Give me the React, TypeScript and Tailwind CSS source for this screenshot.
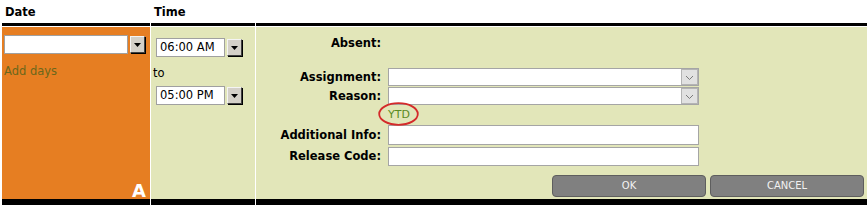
import React from "react";

function ClassicSelect({ width, text }: { width: number; text?: string }) {
  return (
    <div className="flex items-start">
      <div
        className="h-[19px] bg-white border border-[#a0a0a0] pl-[3px] text-[11.5px] leading-[17px] text-black"
        style={{ width }}
      >
        {text}
      </div>
      <div className="ml-[2px] mt-[1px] w-[15px] h-[17px] bg-[#d4d0c8] border border-t-[#f4f4f4] border-l-[#f4f4f4] border-r-[#404040] border-b-[#404040] shadow-[1px_1px_0_#000] flex items-center justify-center">
        <svg width="7" height="4" viewBox="0 0 7 4">
          <polygon points="0,0 7,0 3.5,4" fill="#000" />
        </svg>
      </div>
    </div>
  );
}

function ModernSelect() {
  return (
    <div className="w-[311px] h-[18px] bg-white border border-[#a5a5a5] flex justify-end">
      <div className="w-[17px] h-full bg-[#e1e1e1] border border-[#b4b4b4] flex items-center justify-center">
        <svg width="9" height="6" viewBox="0 0 9 6" className="mt-[2px]">
          <polyline points="1,1 4.5,4.5 8,1" fill="none" stroke="#7a7a7a" strokeWidth="1" />
        </svg>
      </div>
    </div>
  );
}

function TextInput({ h }: { h: number }) {
  return (
    <div
      className="w-[311px] bg-white border border-[#a5a5a5]"
      style={{ height: h }}
    />
  );
}

export default function App() {
  return (
    <div className="w-[868px] h-[205px] bg-white overflow-hidden font-['DejaVu_Sans',Verdana,sans-serif] text-[11.5px] leading-[13px] text-black">
      {/* header row */}
      <div className="flex gap-px pl-[2px]">
        <div className="w-[148px] h-[26px] border-b-[3px] border-black pl-[3px] pt-[6px] font-bold">
          Date
        </div>
        <div className="w-[104px] h-[26px] border-b-[3px] border-black pl-[3px] pt-[6px] font-bold">
          Time
        </div>
        <div className="w-[611px] h-[26px] border-b-[3px] border-black" />
      </div>

      {/* body row */}
      <div className="flex gap-px pl-[2px] mt-px">
        {/* Date cell */}
        <div className="relative w-[148px] h-[178px] bg-[#e67e22] border-b-[6px] border-black pl-[2px] pt-[8px]">
          <ClassicSelect width={124} />
          <div className="mt-[11px] text-[#6b671c]">Add days</div>
          <div className="absolute right-[4px] bottom-[-1px] text-[18px] leading-[18px] font-bold text-white">
            A
          </div>
        </div>

        {/* Time cell */}
        <div className="w-[104px] h-[178px] bg-[#e2e6b9] border-b-[6px] border-black pl-[5px] pt-[11px]">
          <ClassicSelect width={69} text="06:00 AM" />
          <div className="mt-[10px] -ml-[3px]">to</div>
          <div className="mt-[6px]">
            <ClassicSelect width={69} text="05:00 PM" />
          </div>
        </div>

        {/* Main cell */}
        <div className="w-[611px] h-[178px] bg-[#e2e6b9] border-b-[6px] border-black flex flex-col">
          <div className="mt-[10px] flex items-center">
            <div className="w-[125px] text-right font-bold">Absent:</div>
          </div>

          <div className="mt-[18px] flex items-center">
            <div className="w-[125px] text-right font-bold">Assignment:</div>
            <div className="ml-[7px]">
              <ModernSelect />
            </div>
          </div>

          <div className="mt-[1px] flex items-center">
            <div className="w-[125px] text-right font-bold">Reason:</div>
            <div className="ml-[7px]">
              <ModernSelect />
            </div>
          </div>

          <div className="mt-[3px] flex items-center">
            <div className="w-[125px]" />
            <div className="ml-[7px] relative text-[11px] text-[#5b8a22]">
              YTD
              <svg
                className="absolute left-[-10px] top-[-6px]"
                width="41"
                height="24"
                viewBox="0 0 41 24"
              >
                <ellipse cx="20.5" cy="12" rx="19.3" ry="10.8" fill="none" stroke="#d42a2a" strokeWidth="1.8" />
              </svg>
            </div>
          </div>

          <div className="mt-[4px] flex items-center">
            <div className="w-[125px] text-right font-bold">Additional Info:</div>
            <div className="ml-[7px]">
              <TextInput h={20} />
            </div>
          </div>

          <div className="mt-[2px] flex items-center">
            <div className="w-[125px] text-right font-bold">Release Code:</div>
            <div className="ml-[7px]">
              <TextInput h={19} />
            </div>
          </div>

          <div className="mt-[9px] flex justify-end gap-[4px] pr-[3px]">
            <button className="w-[154px] h-[22px] rounded-[4px] bg-[#808080] border border-[#5e5e5e] text-[10px] leading-[20px] text-[#f2f2f2] text-center">
              OK
            </button>
            <button className="w-[154px] h-[22px] rounded-[4px] bg-[#808080] border border-[#5e5e5e] text-[10px] leading-[20px] text-[#f2f2f2] text-center">
              CANCEL
            </button>
          </div>
        </div>
      </div>
    </div>
  );
}
